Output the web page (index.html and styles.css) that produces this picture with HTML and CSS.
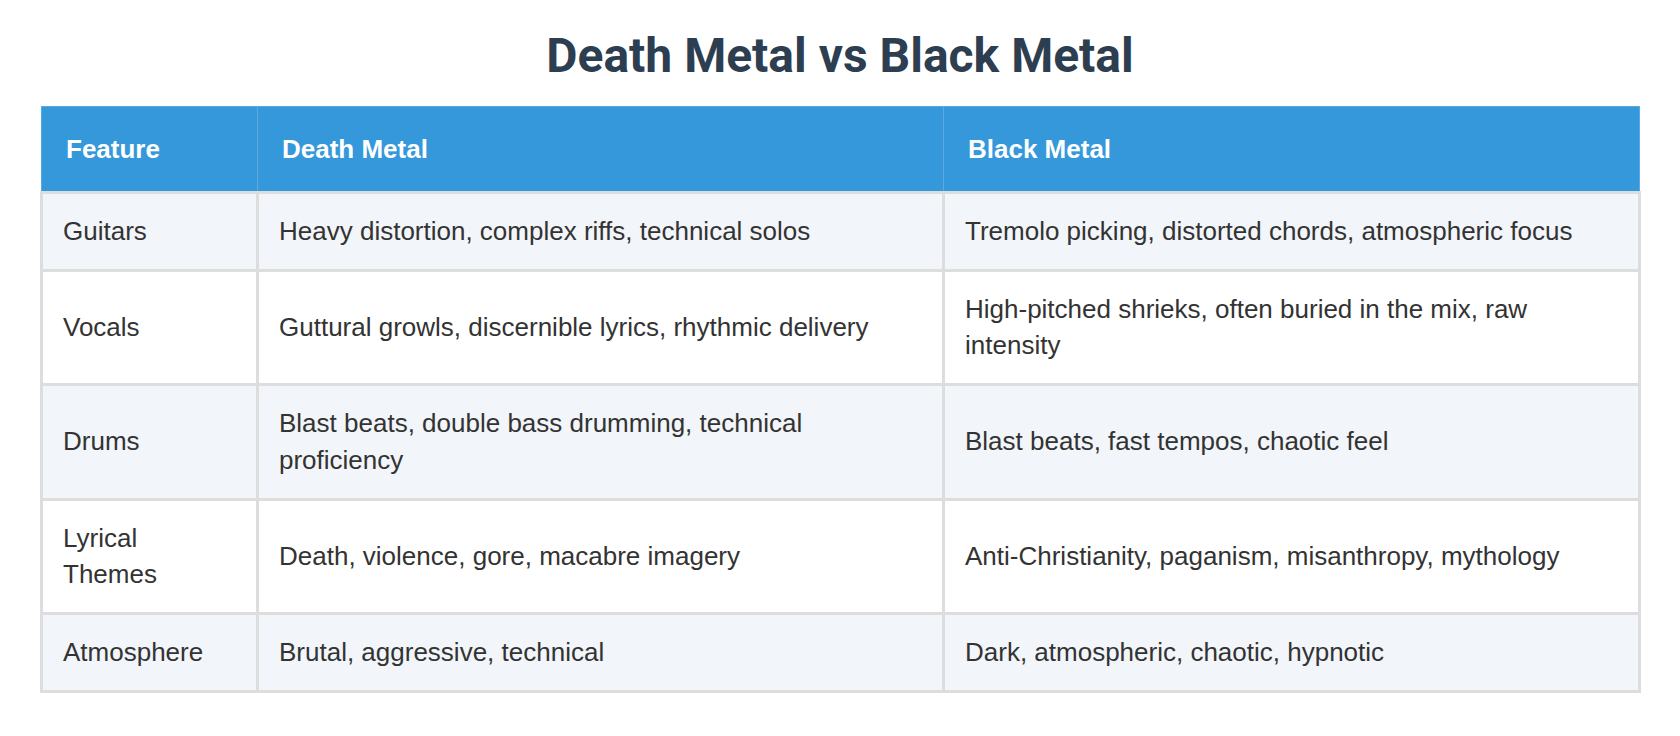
FILE: index.html
```html
<!DOCTYPE html>
<html lang="en">
<head>
<meta charset="utf-8">
<title>Death Metal vs Black Metal</title>
<link rel="stylesheet" href="styles.css">
</head>
<body>
<main class="page">
  <h1 class="title">Death Metal vs Black Metal</h1>
  <table class="compare">
    <colgroup>
      <col class="c1">
      <col class="c2">
      <col class="c3">
    </colgroup>
    <thead>
      <tr>
        <th>Feature</th>
        <th>Death Metal</th>
        <th>Black Metal</th>
      </tr>
    </thead>
    <tbody>
      <tr>
        <td>Guitars</td>
        <td>Heavy distortion, complex riffs, technical solos</td>
        <td>Tremolo picking, distorted chords, atmospheric focus</td>
      </tr>
      <tr>
        <td>Vocals</td>
        <td>Guttural growls, discernible lyrics, rhythmic delivery</td>
        <td>High-pitched shrieks, often buried in the mix, raw intensity</td>
      </tr>
      <tr>
        <td>Drums</td>
        <td>Blast beats, double bass drumming, technical proficiency</td>
        <td>Blast beats, fast tempos, chaotic feel</td>
      </tr>
      <tr>
        <td>Lyrical Themes</td>
        <td>Death, violence, gore, macabre imagery</td>
        <td>Anti-Christianity, paganism, misanthropy, mythology</td>
      </tr>
      <tr>
        <td>Atmosphere</td>
        <td>Brutal, aggressive, technical</td>
        <td>Dark, atmospheric, chaotic, hypnotic</td>
      </tr>
    </tbody>
  </table>
</main>
</body>
</html>
```

FILE: styles.css
```css
html, body {
  margin: 0;
  padding: 0;
  background: #ffffff;
}

.page {
  padding: 28px 40px 40px;
}

.title {
  margin: 0 0 22px;
  text-align: center;
  font-family: Roboto, "Liberation Sans", Arial, sans-serif;
  font-weight: 700;
  font-size: 48px;
  line-height: 56px;
  color: #2c3e50;
}

.compare {
  width: 1598px;
  border-collapse: collapse;
  table-layout: fixed;
  font-family: "Liberation Sans", Arial, sans-serif;
  font-size: 26px;
  line-height: 36.7px;
  color: #333333;
}

.c1 { width: 216px; }
.c2 { width: 686px; }
.c3 { width: 696px; }

.compare th {
  background: #3498db;
  color: #ffffff;
  font-weight: 700;
  text-align: left;
  padding: 24px 24px;
  line-height: 36px;
  border: 1px solid #5aaae2;
  border-bottom: 3px solid #dddddd;
}

.compare td {
  padding: 19px 20px;
  border: 3px solid #dddddd;
  vertical-align: middle;
  background: #ffffff;
}

.compare tbody tr:nth-child(odd) td {
  background: #f2f5f9;
}
```
